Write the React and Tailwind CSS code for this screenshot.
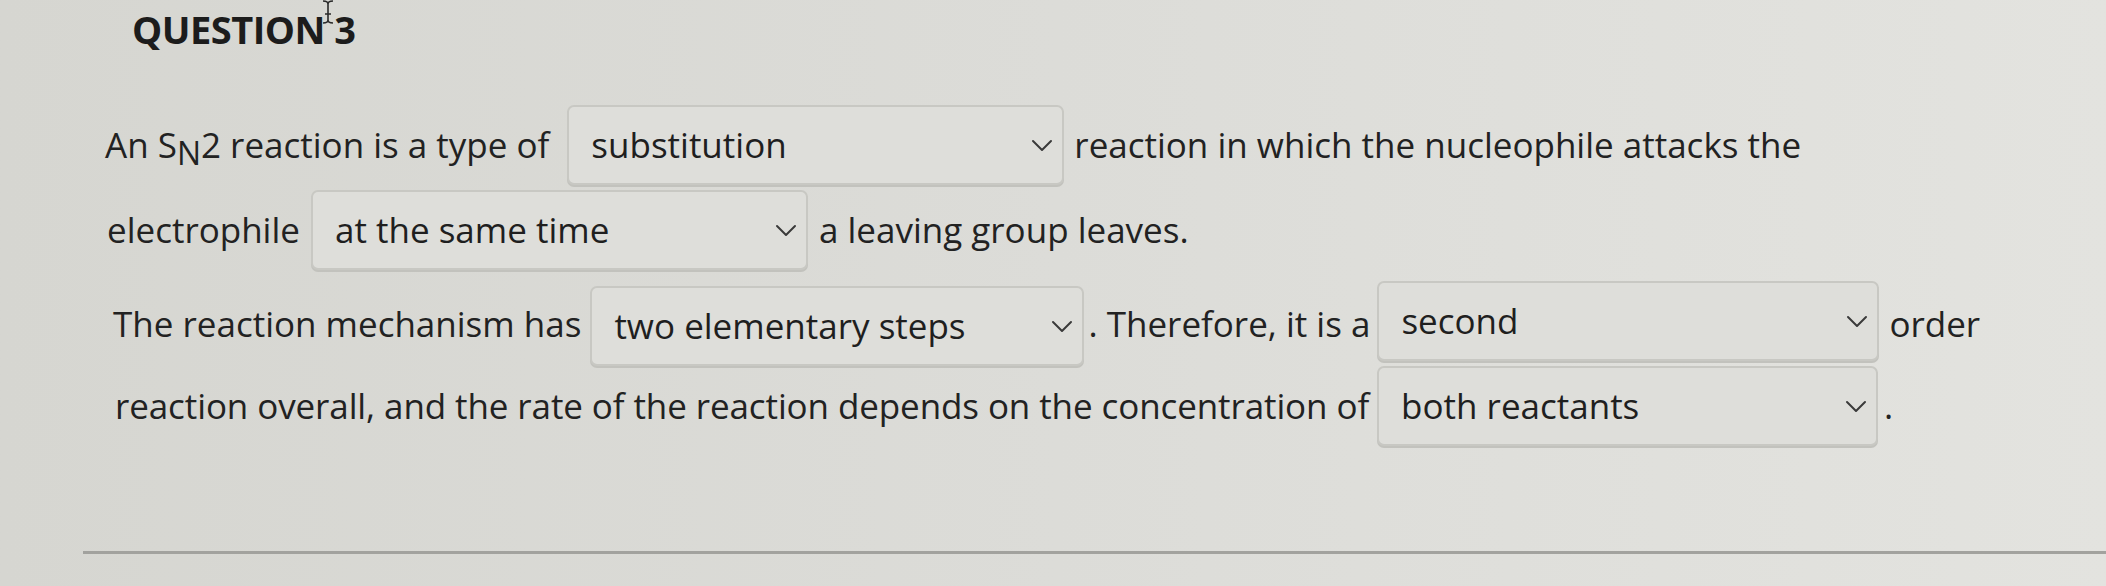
import React from "react";

function Chevron() {
  return (
    <svg width="22" height="14" viewBox="0 0 22 14" fill="none" className="shrink-0">
      <path d="M2 3 L11 12 L20 3" stroke="#3a3a3a" strokeWidth="2" strokeLinecap="round" strokeLinejoin="round" />
    </svg>
  );
}

function Select({ value, width }) {
  return (
    <div
      className={`flex h-[80px] shrink-0 items-center justify-between rounded-[7px] border-2 border-[#c8c8c3] bg-[#dededa] pl-[22px] pr-[9px] shadow-[0_2px_0_#c2c2bd] ${width}`}
    >
      <span className="text-[#1f1f1f]">{value}</span>
      <Chevron />
    </div>
  );
}

export default function App() {
  return (
    <div className="relative h-[586px] w-[2106px] overflow-hidden bg-gradient-to-r from-[#d6d6d1] via-[#dcdcd8] to-[#e3e3df] font-['Open_Sans',sans-serif] text-[35px] text-[#222]">
      <div className="pl-[132px] pt-[10px]">
        <h1 className="relative text-[38px] font-bold leading-none tracking-[-0.5px] text-[#1c1c1c]">
          QUESTION 3
          {/* text cursor */}
          <svg className="absolute left-[190px] top-[-10px]" width="12" height="24" viewBox="0 0 12 24" fill="none">
            <path d="M1 1 Q6 1 6 4 L6 20 Q6 23 1 23 M11 1 Q6 1 6 4 M6 20 Q6 23 11 23 M3 14 L9 14" stroke="#2a2a2a" strokeWidth="1.6" />
          </svg>
        </h1>
      </div>

      <div className="mt-[56px]">
        <div className="flex h-[82px] items-center whitespace-pre pl-[105px]">
          <span>
            An S<span className="relative top-[7px] text-[32px]">N</span>2 reaction is a type of
          </span>
          <div className="ml-[18px] mr-[10px]">
            <Select value="substitution" width="w-[497px]" />
          </div>
          <span>reaction in which the nucleophile attacks the</span>
        </div>

        <div className="mt-[3px] flex h-[82px] items-center whitespace-pre pl-[107px]">
          <span>electrophile</span>
          <div className="ml-[11px] mr-[11px]">
            <Select value="at the same time" width="w-[497px]" />
          </div>
          <span>a leaving group leaves.</span>
        </div>

        <div className="mt-[12px] flex h-[82px] items-center whitespace-pre pl-[113px]">
          <span>The reaction mechanism has</span>
          <div className="ml-[9px] mr-[4px] mt-[4px]">
            <Select value="two elementary steps" width="w-[494px]" />
          </div>
          <span>. Therefore, it is a</span>
          <div className="ml-[7px] mr-[10px] mt-[-6px]">
            <Select value="second" width="w-[502px]" />
          </div>
          <span>order</span>
        </div>

        <div className="flex h-[82px] items-center whitespace-pre pl-[115px]">
          <span className="tracking-[-0.1px]">reaction overall, and the rate of the reaction depends on the concentration of</span>
          <div className="ml-[8px] mr-[6px]">
            <Select value="both reactants" width="w-[501px]" />
          </div>
          <span>.</span>
        </div>
      </div>

      <div className="ml-[83px] mt-[104px] h-[3px] bg-[#a2a29e]" />
    </div>
  );
}
